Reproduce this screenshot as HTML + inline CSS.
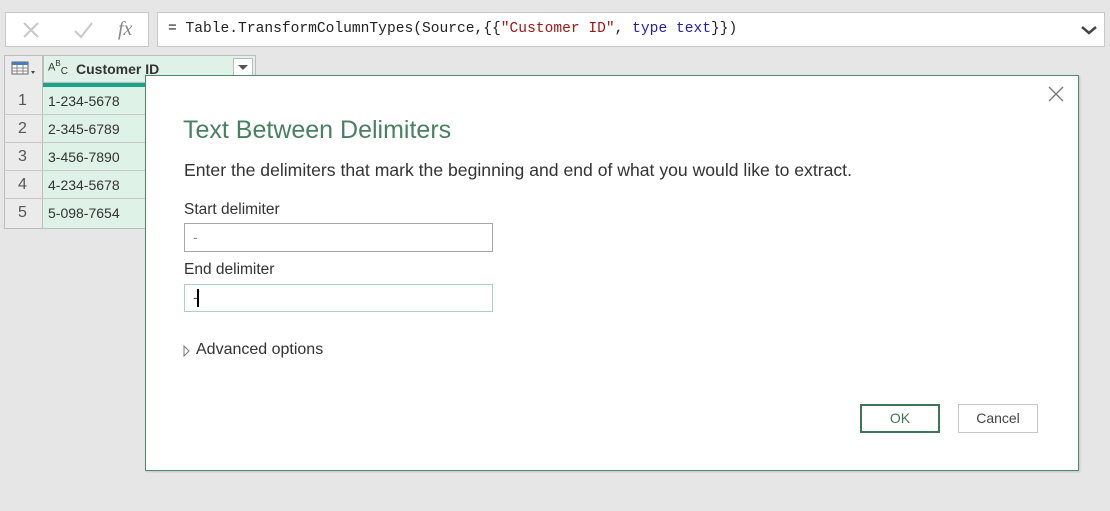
<!DOCTYPE html>
<html><head><style>
body{margin:0;width:1110px;height:511px;background:#e6e6e6;font-family:"Liberation Sans",sans-serif;position:relative;overflow:hidden}
.a{position:absolute}
.cell{position:absolute;box-sizing:border-box;font-size:14px;color:#333}
</style></head><body>
<div class="a" style="left:5px;top:12px;width:144px;height:35px;background:#fff;border:1px solid #c8c8c8;box-sizing:border-box"></div>
<svg class="a" style="left:20px;top:19px" width="120" height="22"><path d="M4 4L18 18M18 4L4 18" stroke="#c8c8c8" stroke-width="2"/><path d="M55 12L61 18L72 4" stroke="#c8c8c8" stroke-width="2" fill="none"/><text x="98" y="16" font-family="Liberation Serif" font-style="italic" font-size="20" fill="#888">fx</text></svg>
<div class="a" style="left:157px;top:12px;width:948px;height:35px;background:#fff;border:1px solid #c8c8c8;box-sizing:border-box;font-family:'Liberation Mono',monospace;font-size:14.6px;line-height:33px;padding-left:10px;color:#222">= Table.TransformColumnTypes(Source,{{<span style="color:#a31515">"Customer ID"</span>, <span style="color:#2020b0">type</span> <span style="color:#2020b0">text</span>}})</div>
<svg class="a" style="left:1080px;top:24px" width="18" height="12"><path d="M2 3L9 9L16 3" stroke="#444" stroke-width="2.5" fill="none"/></svg>
<div class="a" style="left:4px;top:55px;width:252px;height:174px;border:1px solid #bdbdbd;box-sizing:border-box;background:#dff2e7"></div>
<div class="a" style="left:4px;top:55px;width:39px;height:174px;background:#ebebeb;border:1px solid #bdbdbd;box-sizing:border-box"></div>
<div class="a" style="left:43px;top:55px;width:213px;height:28px;background:#e0f2e8;border:1px solid #bdbdbd;box-sizing:border-box"></div>
<div class="a" style="left:43px;top:83px;width:110px;height:4px;background:#1aa68a"></div>
<svg class="a" style="left:11px;top:61px" width="28" height="16"><rect x="1" y="1" width="16" height="12" fill="#fff" stroke="#666"/><rect x="1" y="1" width="16" height="3" fill="#4a7ab8"/><path d="M1 7H17M1 10H17M6 4V13M12 4V13" stroke="#888"/><path d="M20 10L24 10L22 13Z" fill="#444"/></svg>
<div class="cell" style="left:48px;top:59px;font-size:11px">A<sup style="font-size:8px">B</sup><sub style="font-size:10px">C</sub></div>
<div class="cell" style="left:76px;top:61px;font-weight:bold;font-size:14px">Customer ID</div>
<div class="a" style="left:233px;top:58px;width:20px;height:20px;background:#fff;border:1px solid #bbb;box-sizing:border-box"></div>
<svg class="a" style="left:238px;top:65px" width="10" height="6"><path d="M0 0H10L5 5Z" fill="#555"/></svg>
<div class="a" style="left:4px;top:87px;width:252px">
 <div style="height:27px;border-bottom:1px solid #c8c8c8;position:relative"><span class="cell" style="left:14px;top:5px;font-size:16px;color:#555">1</span><span class="cell" style="left:44px;top:6px">1-234-5678</span></div>
 <div style="height:27px;border-bottom:1px solid #c8c8c8;position:relative"><span class="cell" style="left:14px;top:5px;font-size:16px;color:#555">2</span><span class="cell" style="left:44px;top:6px">2-345-6789</span></div>
 <div style="height:27px;border-bottom:1px solid #c8c8c8;position:relative"><span class="cell" style="left:14px;top:5px;font-size:16px;color:#555">3</span><span class="cell" style="left:44px;top:6px">3-456-7890</span></div>
 <div style="height:27px;border-bottom:1px solid #c8c8c8;position:relative"><span class="cell" style="left:14px;top:5px;font-size:16px;color:#555">4</span><span class="cell" style="left:44px;top:6px">4-234-5678</span></div>
 <div style="height:28px;position:relative"><span class="cell" style="left:14px;top:5px;font-size:16px;color:#555">5</span><span class="cell" style="left:44px;top:6px">5-098-7654</span></div>
</div>
<div class="a" style="left:145px;top:75px;width:934px;height:396px;background:#fff;border:1px solid #4f8a68;box-sizing:border-box;box-shadow:1px 1px 2px rgba(0,0,0,.15)"></div>
<svg class="a" style="left:1048px;top:86px" width="16" height="16"><path d="M1 1L15 15M15 1L1 15" stroke="#777" stroke-width="1.3"/></svg>
<div class="a" style="left:183px;top:116px;font-size:25px;color:#4a8062">Text Between Delimiters</div>
<div class="a" style="left:184px;top:160px;font-size:17.6px;color:#333">Enter the delimiters that mark the beginning and end of what you would like to extract.</div>
<div class="a" style="left:184px;top:201px;font-size:15.5px;color:#333">Start delimiter</div>
<div class="a" style="left:184px;top:223px;width:309px;height:29px;border:1px solid #a8a8a8;box-sizing:border-box;font-size:14px;color:#888;padding:5px 0 0 8px">-</div>
<div class="a" style="left:184px;top:261px;font-size:15.5px;color:#333">End delimiter</div>
<div class="a" style="left:184px;top:284px;width:309px;height:28px;border:1px solid #a9d3bd;box-sizing:border-box;font-size:14px;color:#555;padding:4px 0 0 8px">-</div>
<div class="a" style="left:197px;top:289px;width:1.5px;height:18px;background:#000"></div>
<svg class="a" style="left:183px;top:345px" width="8" height="12"><path d="M1 1L6 6L1 11Z" fill="none" stroke="#777"/></svg>
<div class="a" style="left:196px;top:341px;font-size:16px;color:#333">Advanced options</div>
<div class="a" style="left:860px;top:404px;width:80px;height:29px;border:2px solid #3e7556;box-sizing:border-box;text-align:center;line-height:25px;font-size:14px;color:#3e7556">OK</div>
<div class="a" style="left:958px;top:404px;width:80px;height:29px;border:1px solid #c6c6c6;box-sizing:border-box;text-align:center;line-height:27px;font-size:14px;color:#444">Cancel</div>
</body></html>
